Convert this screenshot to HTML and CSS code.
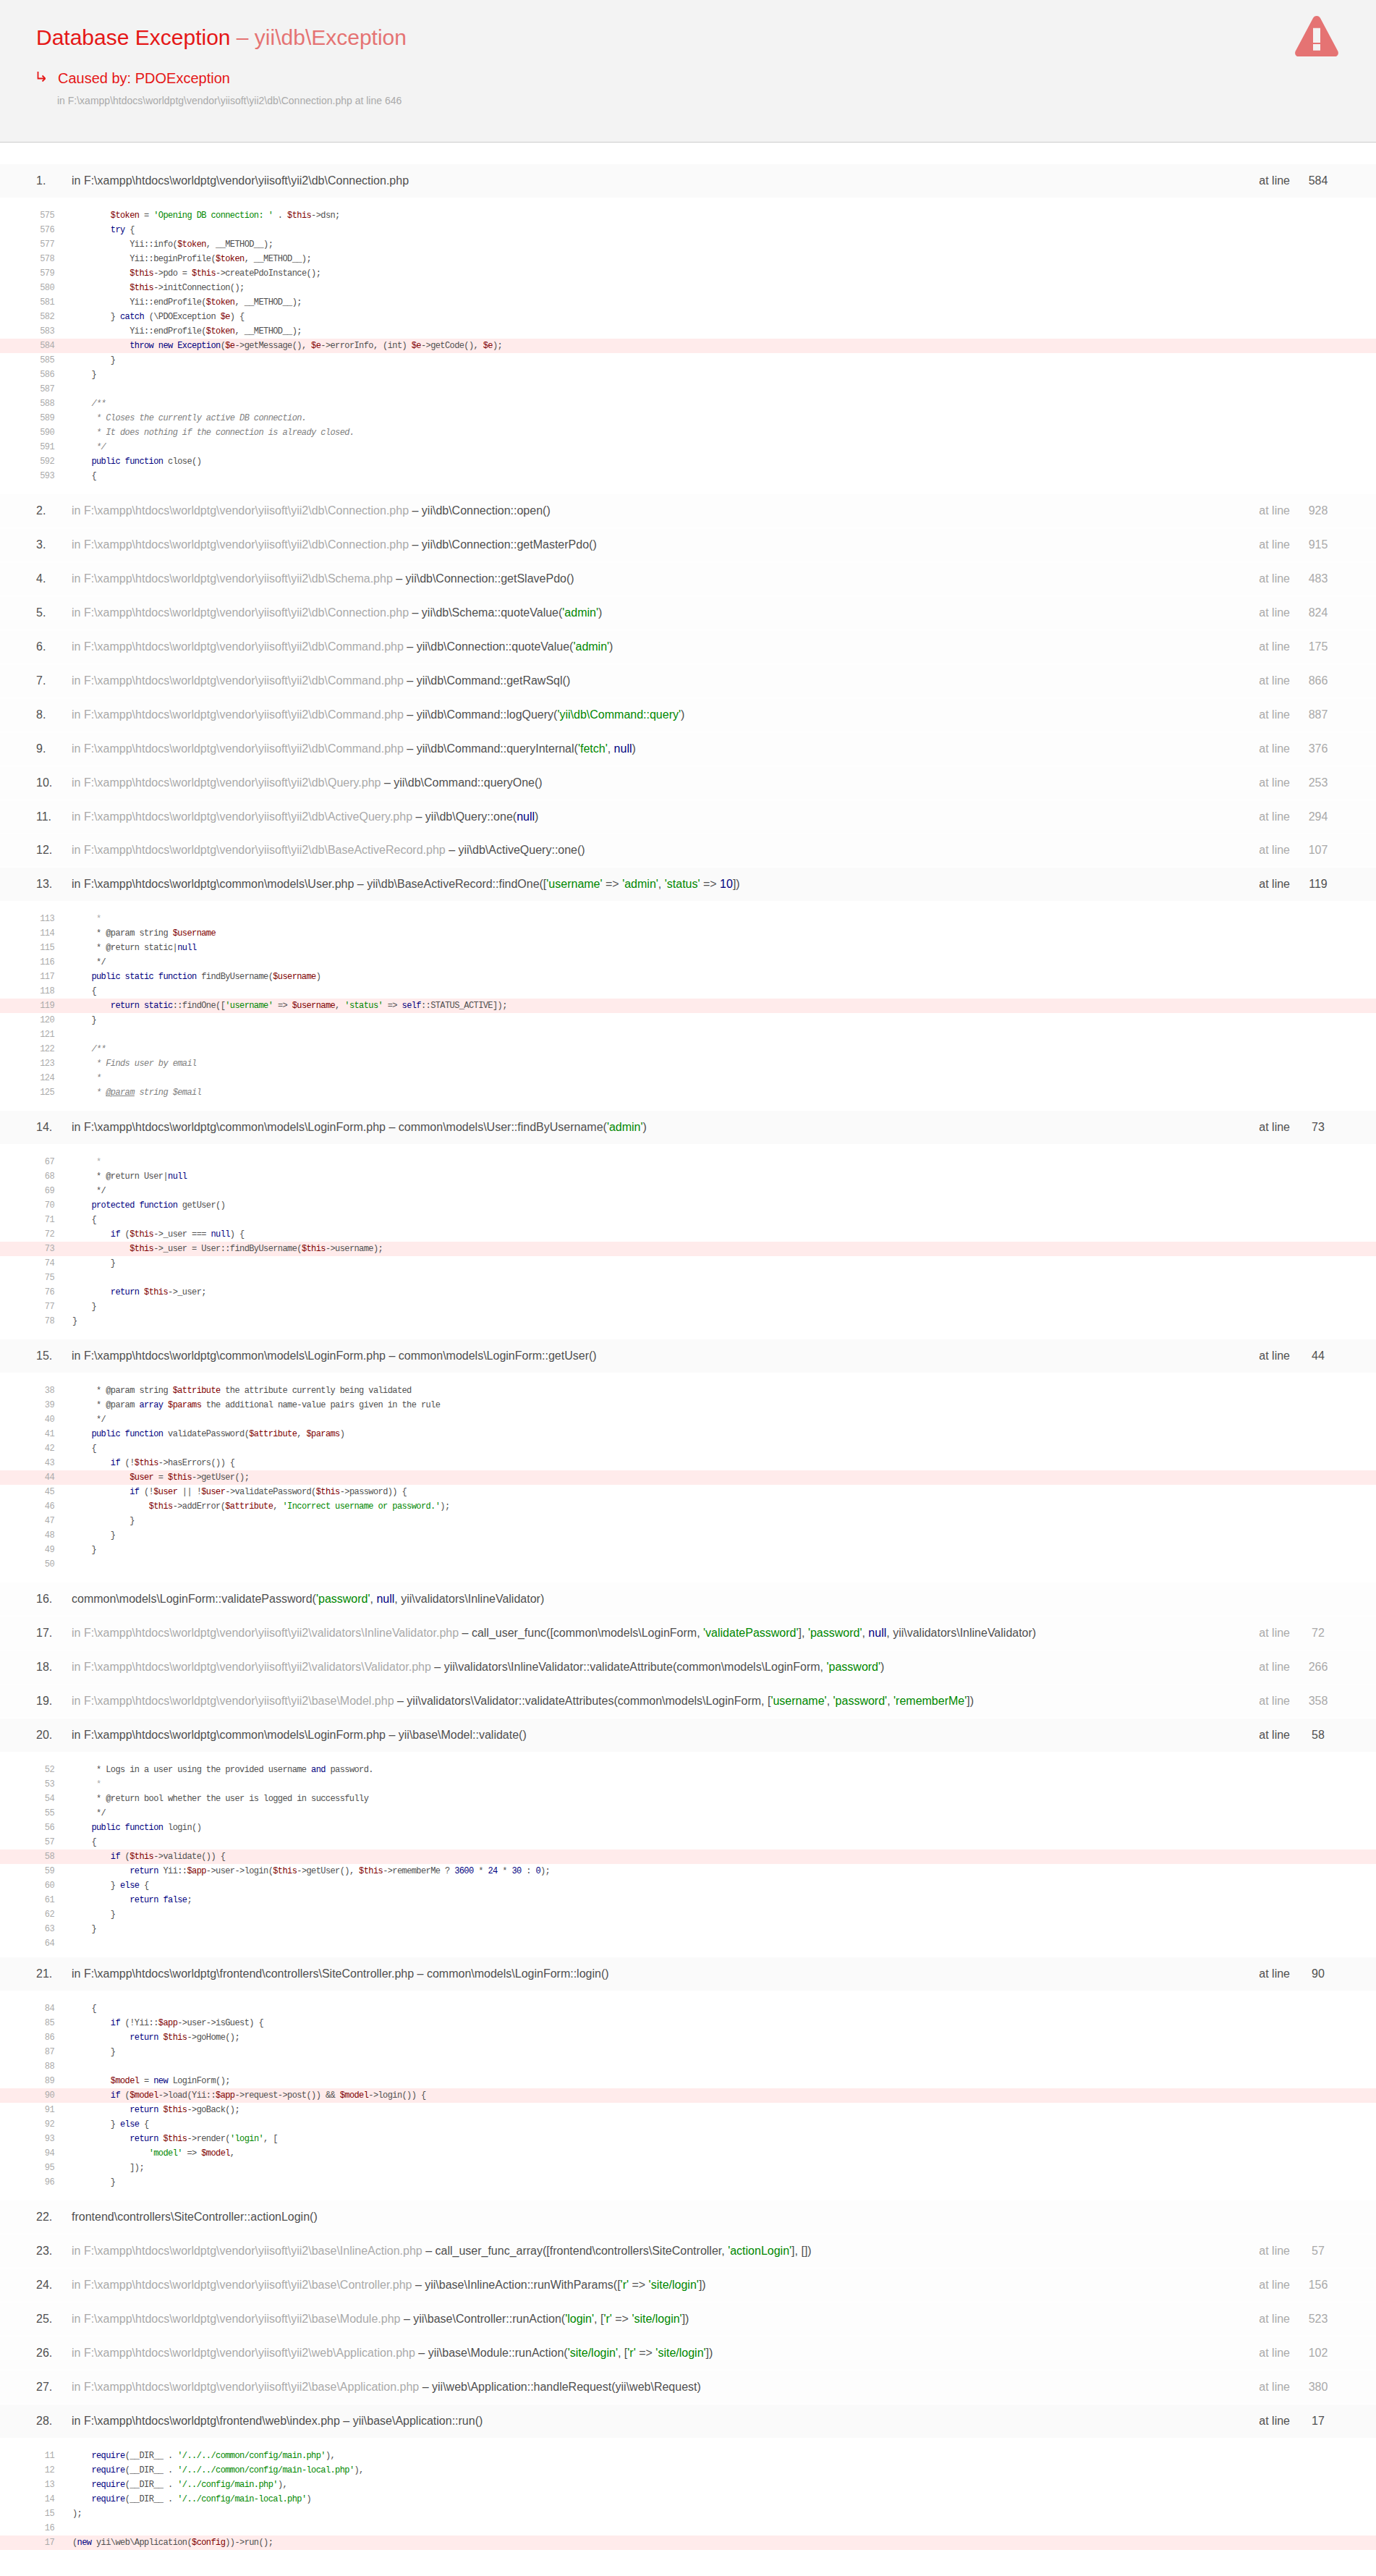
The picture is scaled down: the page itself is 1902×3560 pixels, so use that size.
FILE: index.html
```html
<!DOCTYPE html>
<html lang="en">
<head>
<meta charset="utf-8">
<title>Database Exception – yii\db\Exception</title>
<link rel="stylesheet" href="styles.css">
</head>
<body>
<header class="header">
<svg class="warn-icon" viewBox="0 0 60 56" aria-hidden="true"><path fill-rule="evenodd" d="M30 0c-2.4 0-3.9 1-5 3L.8 48.5C-1 52 1 56 4.5 56h51c3.500 0 5.500-4 3.700-7.500L35 3c-1.100-2-2.600-3-5-3zM25 16.700h10V37H25zM25 39h10v8.700H25z"/></svg>
<h1 class="title"><span class="title-name">Database Exception</span> – yii\db\Exception</h1>
<h2 class="caused"><svg class="caused-arrow" viewBox="0 0 12 14" aria-hidden="true"><path d="M1.500 0v9.500h9.500M7.500 5.500l4 4-4 4" fill="none" stroke="currentColor" stroke-width="1.800"/></svg>Caused by: PDOException</h2>
<p class="caused-file">in F:\xampp\htdocs\worldptg\vendor\yiisoft\yii2\db\Connection.php at line 646</p>
</header>
<main class="call-stack">
<ul class="stack-list">

<li class="application">
<div class="element"><span class="item-number">1.</span><span class="text">in F:\xampp\htdocs\worldptg\vendor\yiisoft\yii2\db\Connection.php</span><span class="at">at line</span><span class="line">584</span></div>
<div class="code">
<div class="cl"><span class="ln">575</span><span class="src">        <span class="v">$token</span> = <span class="s">'Opening DB connection: '</span> . <span class="v">$this</span>-&gt;dsn;</span></div>
<div class="cl"><span class="ln">576</span><span class="src">        <span class="k">try</span> {</span></div>
<div class="cl"><span class="ln">577</span><span class="src">            Yii::info(<span class="v">$token</span>, __METHOD__);</span></div>
<div class="cl"><span class="ln">578</span><span class="src">            Yii::beginProfile(<span class="v">$token</span>, __METHOD__);</span></div>
<div class="cl"><span class="ln">579</span><span class="src">            <span class="v">$this</span>-&gt;pdo = <span class="v">$this</span>-&gt;createPdoInstance();</span></div>
<div class="cl"><span class="ln">580</span><span class="src">            <span class="v">$this</span>-&gt;initConnection();</span></div>
<div class="cl"><span class="ln">581</span><span class="src">            Yii::endProfile(<span class="v">$token</span>, __METHOD__);</span></div>
<div class="cl"><span class="ln">582</span><span class="src">        } <span class="k">catch</span> (\PDOException <span class="v">$e</span>) {</span></div>
<div class="cl"><span class="ln">583</span><span class="src">            Yii::endProfile(<span class="v">$token</span>, __METHOD__);</span></div>
<div class="cl err"><span class="ln">584</span><span class="src">            <span class="k">throw new Exception</span>(<span class="v">$e</span>-&gt;getMessage(), <span class="v">$e</span>-&gt;errorInfo, (int) <span class="v">$e</span>-&gt;getCode(), <span class="v">$e</span>);</span></div>
<div class="cl"><span class="ln">585</span><span class="src">        }</span></div>
<div class="cl"><span class="ln">586</span><span class="src">    }</span></div>
<div class="cl"><span class="ln">587</span><span class="src"></span></div>
<div class="cl"><span class="ln">588</span><span class="src">    <span class="c">/**</span></span></div>
<div class="cl"><span class="ln">589</span><span class="src">     <span class="c">* Closes the currently active DB connection.</span></span></div>
<div class="cl"><span class="ln">590</span><span class="src">     <span class="c">* It does nothing if the connection is already closed.</span></span></div>
<div class="cl"><span class="ln">591</span><span class="src">     <span class="c">*/</span></span></div>
<div class="cl"><span class="ln">592</span><span class="src">    <span class="k">public function</span> close()</span></div>
<div class="cl"><span class="ln">593</span><span class="src">    {</span></div>
</div>
</li>

<li><div class="element"><span class="item-number">2.</span><span class="call"><span class="text">in F:\xampp\htdocs\worldptg\vendor\yiisoft\yii2\db\Connection.php</span> – yii\db\Connection::open()</span><span class="at">at line</span><span class="line">928</span></div></li>
<li><div class="element"><span class="item-number">3.</span><span class="call"><span class="text">in F:\xampp\htdocs\worldptg\vendor\yiisoft\yii2\db\Connection.php</span> – yii\db\Connection::getMasterPdo()</span><span class="at">at line</span><span class="line">915</span></div></li>
<li><div class="element"><span class="item-number">4.</span><span class="call"><span class="text">in F:\xampp\htdocs\worldptg\vendor\yiisoft\yii2\db\Schema.php</span> – yii\db\Connection::getSlavePdo()</span><span class="at">at line</span><span class="line">483</span></div></li>
<li><div class="element"><span class="item-number">5.</span><span class="call"><span class="text">in F:\xampp\htdocs\worldptg\vendor\yiisoft\yii2\db\Connection.php</span> – yii\db\Schema::quoteValue(<span class="s">'admin'</span>)</span><span class="at">at line</span><span class="line">824</span></div></li>
<li><div class="element"><span class="item-number">6.</span><span class="call"><span class="text">in F:\xampp\htdocs\worldptg\vendor\yiisoft\yii2\db\Command.php</span> – yii\db\Connection::quoteValue(<span class="s">'admin'</span>)</span><span class="at">at line</span><span class="line">175</span></div></li>
<li><div class="element"><span class="item-number">7.</span><span class="call"><span class="text">in F:\xampp\htdocs\worldptg\vendor\yiisoft\yii2\db\Command.php</span> – yii\db\Command::getRawSql()</span><span class="at">at line</span><span class="line">866</span></div></li>
<li><div class="element"><span class="item-number">8.</span><span class="call"><span class="text">in F:\xampp\htdocs\worldptg\vendor\yiisoft\yii2\db\Command.php</span> – yii\db\Command::logQuery(<span class="s">'yii\db\Command::query'</span>)</span><span class="at">at line</span><span class="line">887</span></div></li>
<li><div class="element"><span class="item-number">9.</span><span class="call"><span class="text">in F:\xampp\htdocs\worldptg\vendor\yiisoft\yii2\db\Command.php</span> – yii\db\Command::queryInternal(<span class="s">'fetch'</span>, <span class="k">null</span>)</span><span class="at">at line</span><span class="line">376</span></div></li>
<li><div class="element"><span class="item-number">10.</span><span class="call"><span class="text">in F:\xampp\htdocs\worldptg\vendor\yiisoft\yii2\db\Query.php</span> – yii\db\Command::queryOne()</span><span class="at">at line</span><span class="line">253</span></div></li>
<li><div class="element"><span class="item-number">11.</span><span class="call"><span class="text">in F:\xampp\htdocs\worldptg\vendor\yiisoft\yii2\db\ActiveQuery.php</span> – yii\db\Query::one(<span class="k">null</span>)</span><span class="at">at line</span><span class="line">294</span></div></li>
<li><div class="element"><span class="item-number">12.</span><span class="call"><span class="text">in F:\xampp\htdocs\worldptg\vendor\yiisoft\yii2\db\BaseActiveRecord.php</span> – yii\db\ActiveQuery::one()</span><span class="at">at line</span><span class="line">107</span></div></li>

<li class="application">
<div class="element"><span class="item-number">13.</span><span class="call"><span class="text">in F:\xampp\htdocs\worldptg\common\models\User.php</span> – yii\db\BaseActiveRecord::findOne([<span class="s">'username'</span> =&gt; <span class="s">'admin'</span>, <span class="s">'status'</span> =&gt; <span class="k">10</span>])</span><span class="at">at line</span><span class="line">119</span></div>
<div class="code">
<div class="cl"><span class="ln">113</span><span class="src">     <span class="m">*</span></span></div>
<div class="cl"><span class="ln">114</span><span class="src">     * @param string <span class="v">$username</span></span></div>
<div class="cl"><span class="ln">115</span><span class="src">     * @return static|<span class="k">null</span></span></div>
<div class="cl"><span class="ln">116</span><span class="src">     */</span></div>
<div class="cl"><span class="ln">117</span><span class="src">    <span class="k">public static function</span> findByUsername(<span class="v">$username</span>)</span></div>
<div class="cl"><span class="ln">118</span><span class="src">    {</span></div>
<div class="cl err"><span class="ln">119</span><span class="src">        <span class="k">return static</span>::findOne([<span class="s">'username'</span> =&gt; <span class="v">$username</span>, <span class="s">'status'</span> =&gt; <span class="k">self</span>::STATUS_ACTIVE]);</span></div>
<div class="cl"><span class="ln">120</span><span class="src">    }</span></div>
<div class="cl"><span class="ln">121</span><span class="src"></span></div>
<div class="cl"><span class="ln">122</span><span class="src">    <span class="c">/**</span></span></div>
<div class="cl"><span class="ln">123</span><span class="src">     <span class="c">* Finds user by email</span></span></div>
<div class="cl"><span class="ln">124</span><span class="src">     <span class="c">*</span></span></div>
<div class="cl"><span class="ln">125</span><span class="src">     <span class="c">* <span class="doc">@param</span> string $email</span></span></div>
</div>
</li>

<li class="application">
<div class="element"><span class="item-number">14.</span><span class="call"><span class="text">in F:\xampp\htdocs\worldptg\common\models\LoginForm.php</span> – common\models\User::findByUsername(<span class="s">'admin'</span>)</span><span class="at">at line</span><span class="line">73</span></div>
<div class="code">
<div class="cl"><span class="ln">67</span><span class="src">     <span class="m">*</span></span></div>
<div class="cl"><span class="ln">68</span><span class="src">     * @return User|<span class="k">null</span></span></div>
<div class="cl"><span class="ln">69</span><span class="src">     */</span></div>
<div class="cl"><span class="ln">70</span><span class="src">    <span class="k">protected function</span> getUser()</span></div>
<div class="cl"><span class="ln">71</span><span class="src">    {</span></div>
<div class="cl"><span class="ln">72</span><span class="src">        <span class="k">if</span> (<span class="v">$this</span>-&gt;_user === <span class="k">null</span>) {</span></div>
<div class="cl err"><span class="ln">73</span><span class="src">            <span class="v">$this</span>-&gt;_user = User::findByUsername(<span class="v">$this</span>-&gt;username);</span></div>
<div class="cl"><span class="ln">74</span><span class="src">        }</span></div>
<div class="cl"><span class="ln">75</span><span class="src"></span></div>
<div class="cl"><span class="ln">76</span><span class="src">        <span class="k">return</span> <span class="v">$this</span>-&gt;_user;</span></div>
<div class="cl"><span class="ln">77</span><span class="src">    }</span></div>
<div class="cl"><span class="ln">78</span><span class="src">}</span></div>
</div>
</li>

<li class="application">
<div class="element"><span class="item-number">15.</span><span class="call"><span class="text">in F:\xampp\htdocs\worldptg\common\models\LoginForm.php</span> – common\models\LoginForm::getUser()</span><span class="at">at line</span><span class="line">44</span></div>
<div class="code">
<div class="cl"><span class="ln">38</span><span class="src">     * @param string <span class="v">$attribute</span> the attribute currently being validated</span></div>
<div class="cl"><span class="ln">39</span><span class="src">     * @param <span class="k">array</span> <span class="v">$params</span> the additional name-value pairs given in the rule</span></div>
<div class="cl"><span class="ln">40</span><span class="src">     */</span></div>
<div class="cl"><span class="ln">41</span><span class="src">    <span class="k">public function</span> validatePassword(<span class="v">$attribute</span>, <span class="v">$params</span>)</span></div>
<div class="cl"><span class="ln">42</span><span class="src">    {</span></div>
<div class="cl"><span class="ln">43</span><span class="src">        <span class="k">if</span> (!<span class="v">$this</span>-&gt;hasErrors()) {</span></div>
<div class="cl err"><span class="ln">44</span><span class="src">            <span class="v">$user</span> = <span class="v">$this</span>-&gt;getUser();</span></div>
<div class="cl"><span class="ln">45</span><span class="src">            <span class="k">if</span> (!<span class="v">$user</span> || !<span class="v">$user</span>-&gt;validatePassword(<span class="v">$this</span>-&gt;password)) {</span></div>
<div class="cl"><span class="ln">46</span><span class="src">                <span class="v">$this</span>-&gt;addError(<span class="v">$attribute</span>, <span class="s">'Incorrect username or password.'</span>);</span></div>
<div class="cl"><span class="ln">47</span><span class="src">            }</span></div>
<div class="cl"><span class="ln">48</span><span class="src">        }</span></div>
<div class="cl"><span class="ln">49</span><span class="src">    }</span></div>
<div class="cl"><span class="ln">50</span><span class="src"></span></div>
</div>
</li>

<li><div class="element"><span class="item-number">16.</span><span class="call">common\models\LoginForm::validatePassword(<span class="s">'password'</span>, <span class="k">null</span>, yii\validators\InlineValidator)</span></div></li>
<li><div class="element"><span class="item-number">17.</span><span class="call"><span class="text">in F:\xampp\htdocs\worldptg\vendor\yiisoft\yii2\validators\InlineValidator.php</span> – call_user_func([common\models\LoginForm, <span class="s">'validatePassword'</span>], <span class="s">'password'</span>, <span class="k">null</span>, yii\validators\InlineValidator)</span><span class="at">at line</span><span class="line">72</span></div></li>
<li><div class="element"><span class="item-number">18.</span><span class="call"><span class="text">in F:\xampp\htdocs\worldptg\vendor\yiisoft\yii2\validators\Validator.php</span> – yii\validators\InlineValidator::validateAttribute(common\models\LoginForm, <span class="s">'password'</span>)</span><span class="at">at line</span><span class="line">266</span></div></li>
<li><div class="element"><span class="item-number">19.</span><span class="call"><span class="text">in F:\xampp\htdocs\worldptg\vendor\yiisoft\yii2\base\Model.php</span> – yii\validators\Validator::validateAttributes(common\models\LoginForm, [<span class="s">'username'</span>, <span class="s">'password'</span>, <span class="s">'rememberMe'</span>])</span><span class="at">at line</span><span class="line">358</span></div></li>

<li class="application">
<div class="element"><span class="item-number">20.</span><span class="call"><span class="text">in F:\xampp\htdocs\worldptg\common\models\LoginForm.php</span> – yii\base\Model::validate()</span><span class="at">at line</span><span class="line">58</span></div>
<div class="code code-tight">
<div class="cl"><span class="ln">52</span><span class="src">     * Logs in a user using the provided username <span class="k">and</span> password.</span></div>
<div class="cl"><span class="ln">53</span><span class="src">     <span class="m">*</span></span></div>
<div class="cl"><span class="ln">54</span><span class="src">     * @return bool whether the user is logged in successfully</span></div>
<div class="cl"><span class="ln">55</span><span class="src">     */</span></div>
<div class="cl"><span class="ln">56</span><span class="src">    <span class="k">public function</span> login()</span></div>
<div class="cl"><span class="ln">57</span><span class="src">    {</span></div>
<div class="cl err"><span class="ln">58</span><span class="src">        <span class="k">if</span> (<span class="v">$this</span>-&gt;validate()) {</span></div>
<div class="cl"><span class="ln">59</span><span class="src">            <span class="k">return</span> Yii::<span class="v">$app</span>-&gt;user-&gt;login(<span class="v">$this</span>-&gt;getUser(), <span class="v">$this</span>-&gt;rememberMe ? <span class="k">3600</span> * <span class="k">24</span> * <span class="k">30</span> : <span class="k">0</span>);</span></div>
<div class="cl"><span class="ln">60</span><span class="src">        } <span class="k">else</span> {</span></div>
<div class="cl"><span class="ln">61</span><span class="src">            <span class="k">return false</span>;</span></div>
<div class="cl"><span class="ln">62</span><span class="src">        }</span></div>
<div class="cl"><span class="ln">63</span><span class="src">    }</span></div>
<div class="cl"><span class="ln">64</span><span class="src"></span></div>
</div>
</li>

<li class="application">
<div class="element"><span class="item-number">21.</span><span class="call"><span class="text">in F:\xampp\htdocs\worldptg\frontend\controllers\SiteController.php</span> – common\models\LoginForm::login()</span><span class="at">at line</span><span class="line">90</span></div>
<div class="code">
<div class="cl"><span class="ln">84</span><span class="src">    {</span></div>
<div class="cl"><span class="ln">85</span><span class="src">        <span class="k">if</span> (!Yii::<span class="v">$app</span>-&gt;user-&gt;isGuest) {</span></div>
<div class="cl"><span class="ln">86</span><span class="src">            <span class="k">return</span> <span class="v">$this</span>-&gt;goHome();</span></div>
<div class="cl"><span class="ln">87</span><span class="src">        }</span></div>
<div class="cl"><span class="ln">88</span><span class="src"></span></div>
<div class="cl"><span class="ln">89</span><span class="src">        <span class="v">$model</span> = <span class="k">new</span> LoginForm();</span></div>
<div class="cl err"><span class="ln">90</span><span class="src">        <span class="k">if</span> (<span class="v">$model</span>-&gt;load(Yii::<span class="v">$app</span>-&gt;request-&gt;post()) &amp;&amp; <span class="v">$model</span>-&gt;login()) {</span></div>
<div class="cl"><span class="ln">91</span><span class="src">            <span class="k">return</span> <span class="v">$this</span>-&gt;goBack();</span></div>
<div class="cl"><span class="ln">92</span><span class="src">        } <span class="k">else</span> {</span></div>
<div class="cl"><span class="ln">93</span><span class="src">            <span class="k">return</span> <span class="v">$this</span>-&gt;render(<span class="s">'login'</span>, [</span></div>
<div class="cl"><span class="ln">94</span><span class="src">                <span class="s">'model'</span> =&gt; <span class="v">$model</span>,</span></div>
<div class="cl"><span class="ln">95</span><span class="src">            ]);</span></div>
<div class="cl"><span class="ln">96</span><span class="src">        }</span></div>
</div>
</li>

<li><div class="element"><span class="item-number">22.</span><span class="call">frontend\controllers\SiteController::actionLogin()</span></div></li>
<li><div class="element"><span class="item-number">23.</span><span class="call"><span class="text">in F:\xampp\htdocs\worldptg\vendor\yiisoft\yii2\base\InlineAction.php</span> – call_user_func_array([frontend\controllers\SiteController, <span class="s">'actionLogin'</span>], [])</span><span class="at">at line</span><span class="line">57</span></div></li>
<li><div class="element"><span class="item-number">24.</span><span class="call"><span class="text">in F:\xampp\htdocs\worldptg\vendor\yiisoft\yii2\base\Controller.php</span> – yii\base\InlineAction::runWithParams([<span class="s">'r'</span> =&gt; <span class="s">'site/login'</span>])</span><span class="at">at line</span><span class="line">156</span></div></li>
<li><div class="element"><span class="item-number">25.</span><span class="call"><span class="text">in F:\xampp\htdocs\worldptg\vendor\yiisoft\yii2\base\Module.php</span> – yii\base\Controller::runAction(<span class="s">'login'</span>, [<span class="s">'r'</span> =&gt; <span class="s">'site/login'</span>])</span><span class="at">at line</span><span class="line">523</span></div></li>
<li><div class="element"><span class="item-number">26.</span><span class="call"><span class="text">in F:\xampp\htdocs\worldptg\vendor\yiisoft\yii2\web\Application.php</span> – yii\base\Module::runAction(<span class="s">'site/login'</span>, [<span class="s">'r'</span> =&gt; <span class="s">'site/login'</span>])</span><span class="at">at line</span><span class="line">102</span></div></li>
<li><div class="element"><span class="item-number">27.</span><span class="call"><span class="text">in F:\xampp\htdocs\worldptg\vendor\yiisoft\yii2\base\Application.php</span> – yii\web\Application::handleRequest(yii\web\Request)</span><span class="at">at line</span><span class="line">380</span></div></li>

<li class="application">
<div class="element"><span class="item-number">28.</span><span class="call"><span class="text">in F:\xampp\htdocs\worldptg\frontend\web\index.php</span> – yii\base\Application::run()</span><span class="at">at line</span><span class="line">17</span></div>
<div class="code">
<div class="cl"><span class="ln">11</span><span class="src">    <span class="k">require</span>(__DIR__ . <span class="s">'/../../common/config/main.php'</span>),</span></div>
<div class="cl"><span class="ln">12</span><span class="src">    <span class="k">require</span>(__DIR__ . <span class="s">'/../../common/config/main-local.php'</span>),</span></div>
<div class="cl"><span class="ln">13</span><span class="src">    <span class="k">require</span>(__DIR__ . <span class="s">'/../config/main.php'</span>),</span></div>
<div class="cl"><span class="ln">14</span><span class="src">    <span class="k">require</span>(__DIR__ . <span class="s">'/../config/main-local.php'</span>)</span></div>
<div class="cl"><span class="ln">15</span><span class="src">);</span></div>
<div class="cl"><span class="ln">16</span><span class="src"></span></div>
<div class="cl err"><span class="ln">17</span><span class="src">(<span class="k">new</span> yii\web\Application(<span class="v">$config</span>))-&gt;run();</span></div>
</div>
</li>

</ul>
</main>
</body>
</html>
```
FILE: styles.css
```css
html, body {
  margin: 0;
  padding: 0;
}
body {
  background: #fff;
  color: #505050;
  font-family: "Liberation Sans", Arial, sans-serif;
  font-size: 16px;
}
.header {
  position: relative;
  height: 196px;
  box-sizing: content-box;
  padding: 0 50px;
  background: #f3f3f3;
  border-bottom: 1px solid #ccc;
  display: flow-root;
}
.warn-icon {
  position: absolute;
  top: 22px;
  right: 52px;
  width: 60px;
  height: 56px;
  fill: #e57373;
}
.title {
  margin: 35px 0 0;
  font-size: 30px;
  line-height: 34px;
  font-weight: normal;
  color: #e57373;
}
.title-name {
  color: #e51717;
}
.caused {
  display: flex;
  margin: 27px 0 0;
  font-size: 20px;
  line-height: 24px;
  font-weight: normal;
  color: #e51717;
}
.caused-arrow {
  width: 12px;
  height: 14px;
  margin: 3px 17px 0 1px;
  flex: none;
}
.caused-file {
  margin: 10px 0 0 29px;
  font-size: 14px;
  line-height: 18px;
  color: #aaa;
}
.call-stack {
  margin: 30px 0 24px;
}
.stack-list {
  list-style: none;
  margin: 0;
  padding: 0;
}
.stack-list li {
  margin: 1px 0;
}
.element {
  display: flex;
  padding: 15px 50px;
  line-height: 15.95px;
  background: #fdfdfd;
  white-space: nowrap;
}
.application .element {
  background: #fafafa;
}
.item-number {
  flex: none;
  width: 49px;
}
.call {
  flex: 1;
  min-width: 0;
  white-space: pre-wrap;
}
.text {
  flex: 1;
  color: #aaa;
}
.application .text {
  color: #505050;
}
.at {
  margin: 0 9px 0 16px;
  color: #aaa;
}
.line {
  flex: none;
  width: 60px;
  text-align: center;
  color: #aaa;
}
.application .at,
.application .line {
  color: #505050;
}
.s {
  color: #008800;
}
.k {
  color: #000080;
}
.code {
  margin: 15px 0;
}
.code-tight {
  margin-bottom: 9px;
}
.cl {
  display: flex;
  height: 20px;
  padding: 0 50px;
  font-family: "Liberation Mono", "Courier New", monospace;
  font-size: 12px;
  line-height: 20px;
  letter-spacing: -0.6px;
}
.cl.err {
  background: #ffebeb;
}
.ln {
  flex: none;
  width: 25px;
  text-align: right;
  color: #aaa;
}
.src {
  margin-left: 25px;
  white-space: pre;
}
.v {
  color: #800000;
}
.c {
  color: #808080;
  font-style: italic;
}
.m {
  color: #aaa;
}
.doc {
  text-decoration: underline;
}
```
